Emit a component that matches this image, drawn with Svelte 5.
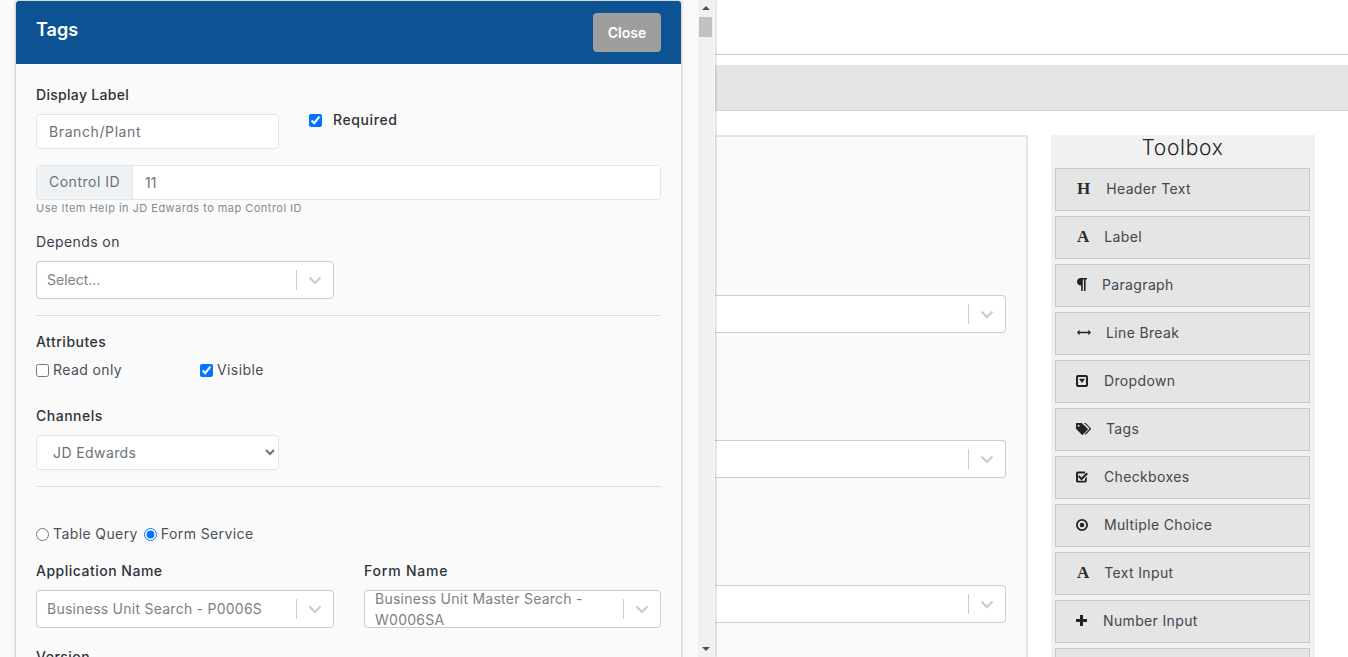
<script>
  const tools = [
    { name: "Header Text", icon: "H" },
    { name: "Label", icon: "A" },
    { name: "Paragraph", icon: "para" },
    { name: "Line Break", icon: "arrows" },
    { name: "Dropdown", icon: "caret" },
    { name: "Tags", icon: "tags" },
    { name: "Checkboxes", icon: "check" },
    { name: "Multiple Choice", icon: "dot" },
    { name: "Text Input", icon: "A" },
    { name: "Number Input", icon: "plus" },
    { name: "", icon: "" }
  ];
</script>

<div class="page">
  <header class="topbar"></header>
  <div class="greybar"></div>
  <div class="content">
    <section class="canvas">
      <div class="canvas-select first"><span class="sep"></span><svg class="chev" viewBox="0 0 20 20"><path d="M4.500 7.500 10 13l5.500-5.500" /></svg></div>
      <div class="canvas-select"><span class="sep"></span><svg class="chev" viewBox="0 0 20 20"><path d="M4.500 7.500 10 13l5.500-5.500" /></svg></div>
      <div class="canvas-select"><span class="sep"></span><svg class="chev" viewBox="0 0 20 20"><path d="M4.500 7.500 10 13l5.500-5.500" /></svg></div>
    </section>
    <aside class="toolbox">
      <h2>Toolbox</h2>
      {#each tools as tool}
        <div class="tool">
          {#if tool.icon === "H"}
            <span class="serif h">H</span>
          {:else if tool.icon === "A"}
            <span class="serif a">A</span>
          {:else if tool.icon === "para"}
            <svg width="10" height="13" viewBox="0 0 10 13"><path d="M4 0h6v1.600H8.600V13H7V1.600H5.800V13H4.200V7.400C1.600 7.400 0 5.900 0 3.700S1.600 0 4 0z" /></svg>
          {:else if tool.icon === "arrows"}
            <svg width="14" height="7" viewBox="0 0 14 7"><path d="M0 3.500 2.600.8v2h8.800v-2L14 3.500l-2.600 2.700v-2H2.600v2z" /></svg>
          {:else if tool.icon === "caret"}
            <svg class="wide" width="12" height="12" viewBox="0 0 12 12"><path fill-rule="evenodd" d="M2 0h8a2 2 0 0 1 2 2v8a2 2 0 0 1-2 2H2a2 2 0 0 1-2-2V2a2 2 0 0 1 2-2zm0 2v8h8V2zM3 3.800h6L6 8z" /></svg>
          {:else if tool.icon === "tags"}
            <svg class="tag-icon" width="15" height="12" viewBox="0 0 15 12"><path fill-rule="evenodd" d="M.6 0h4.600c.4 0 .8.200 1 .4l5.300 5.200c.4.400.4 1 0 1.400L7 11.600c-.4.400-1 .4-1.400 0L.4 6.300C.2 6.100 0 5.700 0 5.300V.7C0 .3.300 0 .6 0zm2 1.700a1 1 0 1 0 0 2 1 1 0 0 0 0-2z" /><path d="M8 0h1.200c.4 0 .8.200 1 .4L14.600 5c.5.500.5 1.100 0 1.600l-4.500 4.700c-.4.400-.9.400-1.300 0l-.2-.2 4.200-4.300c.6-.7.600-1.500 0-2.200z" /></svg>
          {:else if tool.icon === "check"}
            <svg class="wide" width="12" height="12" viewBox="0 0 12 12"><path d="M2 .6h7v1.800H2.200a.2.200 0 0 0-.2.200v7c0 .1.100.2.200.2h6.600c.1 0 .2-.1.200-.2V7.600l1.800-1.800v3.900a1.900 1.900 0 0 1-1.900 1.900H1.900A1.900 1.900 0 0 1 0 9.700V2.500A1.900 1.900 0 0 1 2 .6z" /><path d="M3.400 4.300 5.500 6.400 10.500 1.400 12 2.900 5.500 9.400 1.900 5.800z" /></svg>
          {:else if tool.icon === "dot"}
            <svg class="wide" width="12" height="12" viewBox="0 0 12 12"><circle cx="6" cy="6" r="5.100" fill="none" stroke="#222" stroke-width="1.800" /><circle cx="6" cy="6" r="2.300" /></svg>
          {:else if tool.icon === "plus"}
            <svg class="wide" width="11" height="11" viewBox="0 0 11 11"><path d="M4 0h3v4h4v3H7v4H4V7H0V4h4z" /></svg>
          {/if}
          <span class="tool-name">{tool.name}</span>
        </div>
      {/each}
    </aside>
  </div>

  <div class="drawer">
    <div class="panel">
      <div class="panel-head">
        <h1>Tags</h1>
        <button class="close">Close</button>
      </div>
      <form class="panel-body">
        <div class="row-label">
          <div class="field-label">
            <label class="strong" for="display">Display Label</label>
            <input id="display" class="input" value="Branch/Plant" />
          </div>
          <label class="required"><input type="checkbox" checked /><span>Required</span></label>
        </div>

        <div class="group">
          <span class="addon">Control ID</span>
          <input class="group-input" value="11" />
        </div>
        <small>Use Item Help in JD Edwards to map Control ID</small>

        <div class="plain-label">Depends on</div>
        <div class="rselect narrow">
          <span class="rvalue placeholder">Select...</span>
          <span class="sep"></span>
          <svg class="chev" viewBox="0 0 20 20"><path d="M4.500 7.500 10 13l5.500-5.500" /></svg>
        </div>

        <hr class="hr-one" />

        <div class="strong attr">Attributes</div>
        <div class="attrs">
          <label class="check readonly"><input type="checkbox" /><span>Read only</span></label>
          <label class="check"><input type="checkbox" checked /><span>Visible</span></label>
        </div>

        <div class="strong chan">Channels</div>
        <select class="input channel">
          <option>JD Edwards</option>
        </select>

        <hr class="hr-two" />

        <div class="radios">
          <label class="check"><input type="radio" name="src" /><span>Table Query</span></label>
          <label class="check"><input type="radio" name="src" checked /><span>Form Service</span></label>
        </div>

        <div class="two">
          <div>
            <div class="strong">Application Name</div>
            <div class="rselect">
              <span class="rvalue">Business Unit Search - P0006S</span>
              <span class="sep"></span>
              <svg class="chev" viewBox="0 0 20 20"><path d="M4.500 7.500 10 13l5.500-5.500" /></svg>
            </div>
          </div>
          <div>
            <div class="strong form-name">Form Name</div>
            <div class="rselect">
              <span class="rvalue wrap">Business Unit Master Search - W0006SA</span>
              <span class="sep"></span>
              <svg class="chev" viewBox="0 0 20 20"><path d="M4.500 7.500 10 13l5.500-5.500" /></svg>
            </div>
          </div>
        </div>

        <div class="strong version">Version</div>
      </form>
    </div>
    <div class="scrollbar">
      <span class="arrow up"></span>
      <span class="thumb"></span>
      <span class="arrow down"></span>
    </div>
  </div>
</div>

<style>
  :global(body) {
    margin: 0;
    background: #fff;
    overflow: hidden;
  }

  .page {
    position: relative;
    width: 1348px;
    height: 657px;
    overflow: hidden;
    font-family: Inter, "Open Sans", sans-serif;
    font-size: 14px;
    letter-spacing: 0.4px;
    color: #212529;
  }

  .topbar {
    height: 54px;
    border-bottom: 1px solid #c9ced1;
    margin-bottom: 10px;
  }

  .greybar {
    height: 45px;
    background: #e5e5e5;
    border-bottom: 1px solid #d4d4d4;
  }

  .content {
    display: flex;
    padding: 24px 33px 0 715px;
    align-items: flex-start;
  }

  .canvas {
    width: 313px;
    height: 560px;
    box-sizing: border-box;
    background: #fafafa;
    border: 2px solid #e3e3e3;
    border-left: 0;
    padding-top: 158px;
    margin-right: 23px;
    flex: none;
  }

  .canvas-select {
    height: 38px;
    width: 291px;
    box-sizing: border-box;
    background: #fff;
    border: 1px solid #ccc;
    border-left: 0;
    border-radius: 0 4px 4px 0;
    display: flex;
    align-items: center;
    justify-content: flex-end;
    margin-bottom: 107px;
  }

  .sep {
    width: 1px;
    height: 20px;
    background: #ccc;
    flex: none;
  }

  .chev {
    width: 20px;
    height: 20px;
    margin: 0 8px;
    flex: none;
  }

  .chev path {
    fill: none;
    stroke: #ccc;
    stroke-width: 2.200;
  }

  .toolbox {
    width: 264px;
    flex: none;
    background: #f1f1f1;
    padding: 0 5px 0 4px;
    box-sizing: border-box;
    height: 560px;
  }

  .toolbox h2 {
    margin: 0;
    height: 33px;
    line-height: 26px;
    font-size: 21px;
    font-weight: 300;
    letter-spacing: 0.7px;
    text-align: center;
    color: #212529;
  }

  .tool {
    height: 43px;
    box-sizing: border-box;
    background: #e5e5e5;
    border: 1px solid #c8c8c8;
    margin-bottom: 5px;
    display: flex;
    align-items: center;
    padding: 0 0 2px 21px;
    gap: 15px;
    color: #43474c;
    letter-spacing: 0.35px;
  }

  .tool svg {
    fill: #222;
    flex: none;
  }

  .tool svg.wide {
    margin: 0 1px 0 -1px;
  }

  .tool svg.tag-icon {
    margin-left: -1px;
  }

  .serif {
    font-family: "Liberation Serif", serif;
    font-weight: 700;
    font-size: 17px;
    letter-spacing: 0;
    color: #2b2b2b;
  }

  .serif.h {
    margin-right: 1px;
  }

  .panel-head h1 {
    margin: 0;
    font-size: 18px;
    font-weight: 600;
    letter-spacing: 0;
    color: #fff;
    padding-top: 6px;
  }

  .drawer {
    position: absolute;
    left: 0;
    top: 0;
    width: 715px;
    height: 657px;
    background: #fafafa;
    box-shadow: 1px 0 2px rgba(0, 0, 0, 0.2);
    display: flex;
    overflow: hidden;
  }

  .panel {
    width: 665px;
    margin: 1px 0 0 16px;
    flex: none;
    height: 900px;
    box-shadow: 0 0 3px rgba(0, 0, 0, 0.35);
    background: #fafafa;
  }

  .panel-head {
    height: 63px;
    background: #0d5393;
    border-radius: 3px 3px 0 0;
    box-sizing: border-box;
    padding: 12px 20px 0 20px;
    display: flex;
    justify-content: space-between;
    align-items: flex-start;
  }

  .close {
    width: 68px;
    height: 39px;
    border: 0;
    border-radius: 4px;
    background: #9e9e9e;
    color: #fff;
    font: 600 14px Inter, sans-serif;
  }

  .panel-body {
    padding: 22px 20px 0 20px;
  }

  .strong {
    font-weight: 500;
    display: block;
    line-height: 18px;
    letter-spacing: 0.5px;
    color: #2f3338;
  }

  .row-label {
    display: flex;
    margin-bottom: 16px;
  }

  .field-label .strong {
    margin-bottom: 10px;
    letter-spacing: 0.3px;
  }

  .two .form-name {
    letter-spacing: 0.8px;
  }

  .input {
    width: 243px;
    height: 35px;
    box-sizing: border-box;
    display: block;
    border: 1px solid #e2e5e8;
    border-radius: 4px;
    background: #fff;
    padding: 0 12px;
    font: 14px Inter, sans-serif;
    letter-spacing: 0.6px;
    color: #6b7178;
  }

  .required {
    display: flex;
    align-items: center;
    height: 13px;
    margin: 28px 0 0 30px;
    gap: 11px;
    font-weight: 500;
    letter-spacing: 0.6px;
    color: #2f3338;
  }

  .required span {
    margin-bottom: 3px;
  }

  input[type="checkbox"],
  input[type="radio"] {
    margin: 0;
    width: 13px;
    height: 13px;
    flex: none;
  }

  .group {
    display: flex;
    height: 35px;
    border: 1px solid #e2e5e8;
    border-radius: 4px;
    box-sizing: border-box;
    overflow: hidden;
  }

  .addon {
    width: 96px;
    box-sizing: border-box;
    background: #eff2f5;
    border-right: 1px solid #e2e5e8;
    padding-left: 12px;
    line-height: 31px;
    letter-spacing: 0.5px;
    color: #6b7178;
  }

  .group-input {
    flex: 1;
    min-width: 0;
    border: 0;
    padding: 0 12px;
    font: 14px Inter, sans-serif;
    color: #6b7178;
    outline: 0;
  }

  small {
    display: block;
    font-size: 11px;
    letter-spacing: 0.47px;
    color: #868b91;
    line-height: 16px;
    margin: 0;
  }

  .plain-label {
    margin-top: 17px;
    line-height: 18px;
    margin-bottom: 10px;
    color: #3a3f44;
  }

  .rselect {
    height: 38px;
    box-sizing: border-box;
    background: #fff;
    border: 1px solid #ccc;
    border-radius: 4px;
    display: flex;
    align-items: center;
    padding-left: 10px;
    overflow: hidden;
  }

  .rselect.narrow {
    width: 298px;
  }

  .rvalue {
    flex: 1;
    min-width: 0;
    color: #808080;
    white-space: nowrap;
    letter-spacing: 0.25px;
    padding-bottom: 2px;
  }

  .rvalue.placeholder {
    letter-spacing: 0;
  }

  .rvalue.wrap {
    white-space: normal;
    line-height: 21px;
    padding-bottom: 0;
  }

  hr {
    border: 0;
    border-top: 1px solid #ddd;
    margin: 0;
  }

  .hr-one {
    margin-top: 16px;
  }

  .attr {
    margin-top: 17px;
  }

  .attrs {
    display: flex;
    margin-top: 10px;
  }

  .check {
    display: inline-flex;
    align-items: center;
    gap: 4px;
    color: #4b5056;
    line-height: 18px;
  }

  .readonly {
    width: 164px;
  }

  .chan {
    margin-top: 28px;
    margin-bottom: 10px;
  }

  .channel {
    padding-left: 12px;
    letter-spacing: 0.4px;
  }

  .hr-two {
    margin-top: 16px;
  }

  .radios {
    display: flex;
    gap: 6px;
    margin-top: 38px;
  }

  .two {
    display: grid;
    grid-template-columns: 298px 297px;
    gap: 30px;
    margin-top: 19px;
  }

  .two .strong {
    margin-bottom: 10px;
  }

  .version {
    margin-top: 20px;
  }

  .scrollbar {
    position: absolute;
    left: 698px;
    top: 0;
    width: 16px;
    height: 657px;
    background: #f1f1f1;
  }

  .thumb {
    position: absolute;
    left: 1px;
    top: 17px;
    width: 13px;
    height: 20px;
    background: #c1c1c1;
  }

  .arrow {
    position: absolute;
    left: 4px;
    width: 0;
    height: 0;
    border-left: 4px solid transparent;
    border-right: 4px solid transparent;
  }

  .up {
    top: 6px;
    border-bottom: 4px solid #505050;
  }

  .down {
    bottom: 6px;
    border-top: 4px solid #505050;
  }
</style>
